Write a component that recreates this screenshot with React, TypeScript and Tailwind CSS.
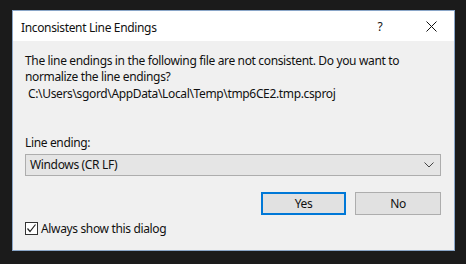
import React from 'react';

const font = { fontFamily: '"Noto Sans", "Open Sans", Arial, sans-serif' };

function Chevron() {
  return (
    <svg width="10" height="6" viewBox="0 0 10 6" className="text-[#444]">
      <path d="M0.5 0.5 L5 5 L9.5 0.5" fill="none" stroke="currentColor" strokeWidth="1" />
    </svg>
  );
}

function CloseGlyph() {
  return (
    <svg width="11" height="11" viewBox="0 0 11 11">
      <path d="M0.5 0.5 L10.5 10.5 M10.5 0.5 L0.5 10.5" stroke="#111" strokeWidth="1" />
    </svg>
  );
}

export default function App() {
  return (
    <div
      className="w-[466px] h-[264px] bg-[#1b1b1b] pt-[10px] pl-[12px] text-[12px] tracking-[-0.35px] text-[#111]"
      style={font}
    >
      <div className="w-[443px] h-[241px] border border-[#8aa6c8] bg-[#f0f0f0] flex flex-col">
        <div className="h-[30px] bg-white flex items-center pl-[8px] shrink-0">
          <span className="flex-1 leading-none mt-[3px]">Inconsistent Line Endings</span>
          <span className="w-[20px] text-center leading-none mr-[36px] mt-[2px]">?</span>
          <span className="mr-[17px] flex items-center"><CloseGlyph /></span>
        </div>

        <div className="flex-1 flex flex-col px-[12px] pt-[12px]">
          <p className="leading-[16px]">
            The line endings in the following file are not consistent. Do you want to
            normalize the line endings?
          </p>
          <p className="leading-[16px] mt-[1px] pl-[3px]">
            C:\Users\sgord\AppData\Local\Temp\tmp6CE2.tmp.csproj
          </p>

          <p className="leading-[17px] mt-[32px]">Line ending:</p>
          <div className="mt-[3px] h-[22px] w-[416px] border border-[#adadad] bg-[#e5e5e5] flex items-center pl-[4px] pr-[6px]">
            <span className="flex-1">Windows (CR LF)</span>
            <Chevron />
          </div>

          <div className="flex justify-end gap-[9px] mt-[16px] pr-[1px]">
            <button className="w-[85px] h-[23px] border-2 border-[#0078d7] bg-[#e1e1e1] leading-none">
              Yes
            </button>
            <button className="w-[86px] h-[23px] border border-[#adadad] bg-[#e1e1e1] leading-none">
              No
            </button>
          </div>

          <div className="flex items-center mt-[7px] gap-[3px]">
            <span className="w-[13px] h-[13px] border border-[#333] bg-white flex items-center justify-center">
              <svg width="11" height="11" viewBox="0 0 11 11">
                <path d="M1.5 5.5 L4 8.5 L9.5 1.5" fill="none" stroke="#222" strokeWidth="1.2" />
              </svg>
            </span>
            <span className="leading-none">Always show this dialog</span>
          </div>
        </div>
      </div>
    </div>
  );
}
